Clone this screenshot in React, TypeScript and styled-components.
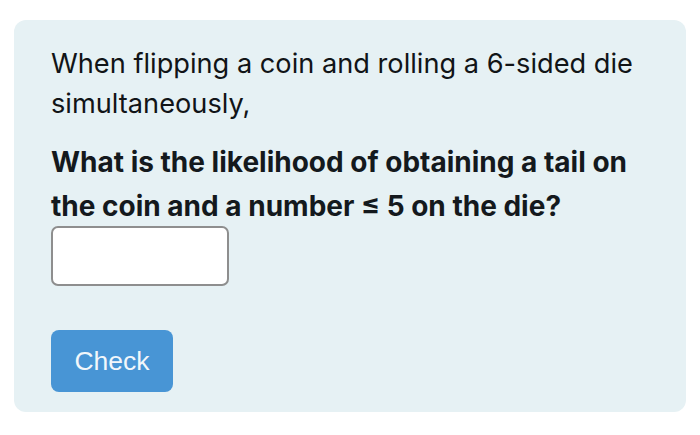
import React from "react";
import styled, { createGlobalStyle } from "styled-components";

const GlobalStyle = createGlobalStyle`
  html, body {
    margin: 0;
    padding: 0;
    background: #ffffff;
  }
  body {
    font-family: Inter, "Noto Sans", sans-serif;
  }
`;

const Page = styled.div`
  width: 700px;
  height: 435px;
  padding: 20px 14px 23px 14px;
  box-sizing: border-box;
  display: flex;
`;

const Card = styled.div`
  flex: 1;
  background: #e6f1f4;
  border-radius: 12px;
  padding: 24px 40px 0 37px;
  display: flex;
  flex-direction: column;
  align-items: flex-start;
`;

const Prompt = styled.p`
  margin: 0;
  font-size: 27.2px;
  line-height: 40px;
  font-weight: 400;
  color: #111417;
`;

const Question = styled.p`
  margin: 16px 0 0 0;
  font-size: 28px;
  line-height: 44px;
  font-weight: 700;
  color: #14191d;
`;

const AnswerInput = styled.input`
  margin-top: -2px;
  width: 178px;
  height: 60px;
  box-sizing: border-box;
  border: 2px solid #8e8e8e;
  border-radius: 7px;
  background: #ffffff;
  outline: none;
`;

const CheckButton = styled.button`
  margin-top: 44px;
  width: 122px;
  height: 62px;
  border: none;
  border-radius: 8px;
  background: #4895d5;
  color: #f2f7fb;
  font-family: "Liberation Sans", Arial, sans-serif;
  font-size: 26.5px;
  cursor: pointer;
`;

export default function App() {
  return (
    <>
      <GlobalStyle />
      <Page>
        <Card>
          <Prompt>
            When flipping a coin and rolling a 6-sided die simultaneously,
          </Prompt>
          <Question>
            What is the likelihood of obtaining a tail on the coin and a number ≤ 5 on the die?
          </Question>
          <AnswerInput type="text" />
          <CheckButton>Check</CheckButton>
        </Card>
      </Page>
    </>
  );
}
